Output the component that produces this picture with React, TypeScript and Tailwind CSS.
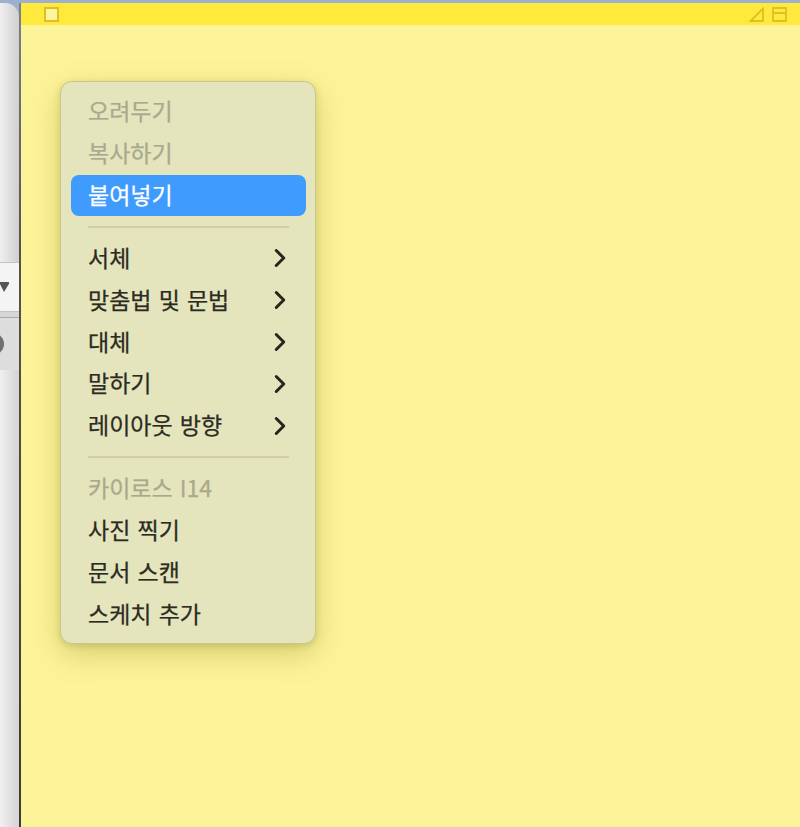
import { ChevronRight } from "lucide-react"

type Item = { label: string; disabled?: boolean; active?: boolean; sub?: boolean }

const groups: Item[][] = [
    [
        { label: "오려두기", disabled: true },
        { label: "복사하기", disabled: true },
        { label: "붙여넣기", active: true },
    ],
    [
        { label: "서체", sub: true },
        { label: "맞춤법 및 문법", sub: true },
        { label: "대체", sub: true },
        { label: "말하기", sub: true },
        { label: "레이아웃 방향", sub: true },
    ],
    [
        { label: "카이로스 I14", disabled: true },
        { label: "사진 찍기" },
        { label: "문서 스캔" },
        { label: "스케치 추가" },
    ],
]

function MenuRow({ item }: { item: Item }) {
    let color = "text-[#2b2b22]"
    if (item.disabled) color = "text-[#a9a98c]"
    if (item.active) color = "bg-[#3f9bfd] text-white"
    return (
        <div className={`flex h-[41.8px] items-center justify-between rounded-lg pl-[17px] pr-[17px] text-[23px] font-normal leading-none [-webkit-text-stroke:0.25px_currentColor] [word-spacing:2px] ${color}`}>
            <span className="pb-[2px]">{item.label}</span>
            {item.sub && <ChevronRight className="-mr-[6px] h-[30px] w-[30px] text-[#26261e]" strokeWidth={2.4} />}
        </div>
    )
}

function ContextMenu() {
    return (
        <div className="absolute left-[60px] top-[81px] w-[256px] rounded-xl border border-[#c9c690] bg-[#e4e4bd] pb-[8px] pl-[10px] pr-[9px] pt-[9px] font-['Noto_Sans_CJK_KR',sans-serif] shadow-[0_2px_6px_rgba(120,110,20,0.22),0_10px_30px_rgba(120,110,20,0.28)]">
            {groups.map((group, i) => (
                <div key={i}>
                    {i > 0 && <div className="mx-[17px] my-[9.6px] h-[2px] bg-[#cfcea8]"></div>}
                    {group.map((item) => (
                        <MenuRow key={item.label} item={item} />
                    ))}
                </div>
            ))}
        </div>
    )
}

function Sidebar() {
    return (
        <div className="flex w-[19px] shrink-0 flex-col overflow-hidden rounded-tr-[14px]">
            <div className="h-[259px] bg-gradient-to-r from-[#efefef] to-[#d0d0d4]"></div>
            <div className="flex h-[50px] items-center border-y border-[#c4c4c4] bg-[#f4f4f4]">
                <svg width="10" height="10" viewBox="0 0 10 10" className="-ml-[1px]">
                    <path d="M0 0h11L5 10z" fill="#555" />
                </svg>
            </div>
            <div className="h-[6px] border-b border-[#a9a9a9] bg-[#d6d6d6]"></div>
            <div className="flex h-[52px] items-center bg-[#dddddd]">
                <div className="-ml-[18px] h-[22px] w-[22px] shrink-0 rounded-full bg-[#707070]"></div>
            </div>
            <div className="flex-1 bg-gradient-to-r from-[#f0f0f0] to-[#d4d4d6]"></div>
        </div>
    )
}

export default function App() {
    return (
        <div className="relative flex h-[827px] w-[800px] flex-col overflow-hidden bg-[#9db0d0]">
            <div className="h-[3px] shrink-0"></div>
            <div className="flex min-h-0 flex-1">
                <Sidebar />
                <div className="w-[2px] shrink-0 bg-gradient-to-b from-[#7d8288] via-[#54544c] via-30% to-[#3c3c34]"></div>
                <div className="flex flex-1 flex-col">
                    <div className="flex h-[22px] shrink-0 items-center justify-between bg-[#fee93c] pl-[23px] pr-[13px]">
                        <div className="h-[15px] w-[15px] border-2 border-[#dcc024] bg-[#fdf3a0]"></div>
                        <div className="flex items-center gap-[8px]">
                            <svg width="15" height="15" viewBox="0 0 15 15" fill="none" stroke="#dcc024" strokeWidth="1.8">
                                <path d="M14 1.5V14H1.5z" />
                            </svg>
                            <svg width="15" height="15" viewBox="0 0 15 15" fill="none" stroke="#dcc024" strokeWidth="1.8">
                                <path d="M1 1h13v13H1zM1 6h13" />
                            </svg>
                        </div>
                    </div>
                    <div className="flex-1 bg-[#fdf398]"></div>
                </div>
            </div>
            <ContextMenu />
        </div>
    )
}
